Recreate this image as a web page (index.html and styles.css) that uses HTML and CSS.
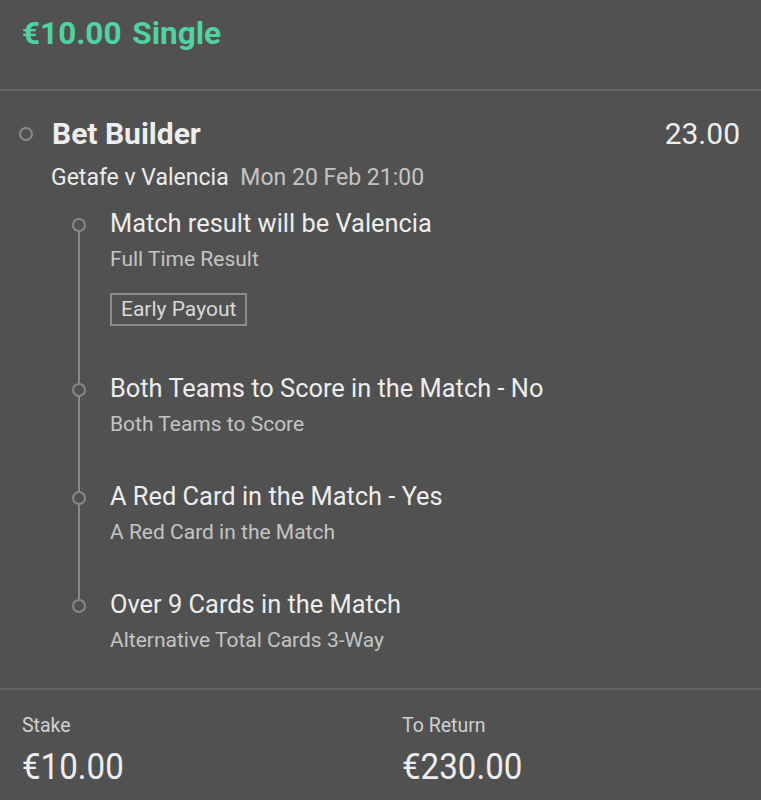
FILE: index.html
```html
<!DOCTYPE html>
<html lang="en">
<head>
  <meta charset="UTF-8" />
  <meta name="viewport" content="width=device-width, initial-scale=1" />
  <title>Bet Slip</title>
  <link rel="stylesheet" href="styles.css">
</head>
<body>
  <header class="slip-header">
    <h1>€10.00 Single</h1>
  </header>
  <main class="bet">
    <div class="bet-head">
      <span class="dot"></span>
      <h2>Bet Builder</h2>
      <span class="odds">23.00</span>
    </div>
    <p class="event">Getafe v Valencia <span class="date">Mon 20 Feb 21:00</span></p>
    <ul class="legs">
      <li class="leg">
        <h3>Match result will be Valencia</h3>
        <p>Full Time Result</p>
        <span class="badge">Early Payout</span>
      </li>
      <li class="leg">
        <h3>Both Teams to Score in the Match - No</h3>
        <p>Both Teams to Score</p>
      </li>
      <li class="leg">
        <h3>A Red Card in the Match - Yes</h3>
        <p>A Red Card in the Match</p>
      </li>
      <li class="leg">
        <h3>Over 9 Cards in the Match</h3>
        <p>Alternative Total Cards 3-Way</p>
      </li>
    </ul>
  </main>
  <footer class="totals">
    <div class="total">
      <span class="label">Stake</span>
      <span class="amount">€10.00</span>
    </div>
    <div class="total">
      <span class="label">To Return</span>
      <span class="amount">€230.00</span>
    </div>
  </footer>
</body>
</html>
```
FILE: styles.css
```css
body {
  font-family: Roboto, "Liberation Sans", sans-serif;
  margin: 0; padding: 0;
  background: #515151;
  color: #ededed;
  height: 800px;
  overflow: hidden;
}
h1, h2, h3, p {
  margin: 0;
}
.slip-header {
  height: 91px;
  padding: 0 22px;
  box-sizing: border-box;
  border-bottom: 2px solid #656565;
}
.slip-header h1 {
  color: #4fd3a2;
  font-size: 31.5px;
  font-weight: 700;
  padding-top: 15px;
  word-spacing: 3px;
}
.bet {
  padding: 0 22px 0 20px;
  height: 597px;
  border-bottom: 2px solid #656565;
}
.bet-head {
  display: flex;
  align-items: center;
  padding-top: 25px;
}
.dot {
  width: 10px;
  height: 10px;
  border: 2px solid #8a8a8a;
  border-radius: 50%;
  margin-left: -1px;
  margin-right: 19px;
}
.bet-head h2 {
  flex: 1;
  font-size: 30px;
  font-weight: 700;
}
.odds {
  font-size: 30px;
  margin-right: -1px;
}
.event {
  font-size: 23px;
  margin: 13px 0 0 31px;
  color: #ececec;
}
.date {
  color: #c4c4c4;
  margin-left: 6px;
}
.legs {
  list-style: none;
  padding: 0;
  margin: 15px 0 0 59px;
  position: relative;
}
.legs::before {
  content: "";
  position: absolute;
  left: -1px;
  top: 19px;
  bottom: 96px;
  width: 2px;
  background: #888;
}
.leg {
  position: relative;
  display: flex;
  flex-direction: column;
  align-items: flex-start;
  padding-left: 31px;
  padding-bottom: 41px;
}
.leg::before {
  content: "";
  position: absolute;
  left: -7px;
  top: 12px;
  width: 10px;
  height: 10px;
  border: 2px solid #888;
  border-radius: 50%;
  background: #515151;
}
.leg h3 {
  font-size: 25.4px;
  font-weight: 400;
  line-height: 34px;
}
.leg p {
  font-size: 21px;
  line-height: 28px;
  color: #c4c4c4;
  margin-top: 5px;
}
.badge {
  margin-top: 20px;
  margin-bottom: 4px;
  border: 2px solid #8c8c8c;
  padding: 2px 9px;
  font-size: 21px;
  line-height: 25px;
  color: #d8d8d8;
}
.totals {
  display: grid;
  grid-template-columns: 380px 1fr;
  padding: 23px 22px 0;
}
.total {
  display: flex;
  flex-direction: column;
  align-items: flex-start;
}
.label {
  font-size: 21px;
  color: #d0d0d0;
  transform: scaleX(0.93);
  transform-origin: left;
}
.amount {
  font-size: 36px;
  margin-top: 9px;
  transform: scaleX(0.92);
  transform-origin: left;
}
```
